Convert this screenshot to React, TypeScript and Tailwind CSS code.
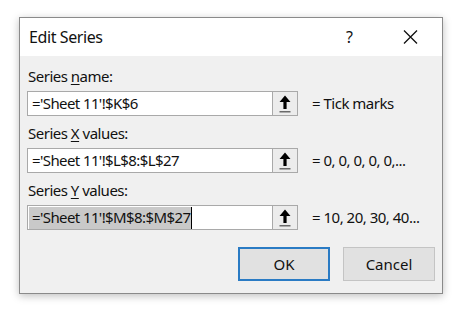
import React from "react";

const font = { fontFamily: '"Noto Sans", "Open Sans", sans-serif' };

function UpArrow() {
  return (
    <svg width="16" height="20" viewBox="0 0 16 20">
      <path d="M8 1.5 L13.5 8 L9.6 8 L9.6 15 L6.4 15 L6.4 8 L2.5 8 Z" fill="#000" />
      <rect x="2.5" y="17" width="11" height="1.5" fill="#6a6a6a" />
    </svg>
  );
}

function RefInput({ text, selected }: { text: string; selected?: boolean }) {
  return (
    <div className="flex h-[25px] w-[271px] border border-[#a9a9a9] bg-white">
      <div className="flex-1 flex items-center pl-[1px] overflow-hidden">
        {selected ? (
          <span className="h-[22px] flex items-center bg-[#c9c9c9] pl-[3px] pr-[1px] border-r border-black text-[15px] tracking-[-0.6px] text-[#111] whitespace-nowrap leading-none">
            {text}
          </span>
        ) : (
          <span className="pl-[3px] text-[15px] tracking-[-0.6px] text-[#111] whitespace-nowrap leading-none">{text}</span>
        )}
      </div>
      <div className="w-[25px] h-full border-l border-[#a9a9a9] bg-[#ececec] flex items-center justify-center">
        <UpArrow />
      </div>
    </div>
  );
}

function Row({
  label,
  mnemonicIdx,
  text,
  value,
  selected,
}: {
  label: string;
  mnemonicIdx: number;
  text: string;
  value: string;
  selected?: boolean;
}) {
  return (
    <div className="flex flex-col">
      <div className="h-[20px] leading-[20px] text-[15px] tracking-[-0.5px] text-[#111] pl-[8px]">
        {label.slice(0, mnemonicIdx)}
        <span className="underline underline-offset-2">{label[mnemonicIdx]}</span>
        {label.slice(mnemonicIdx + 1)}
      </div>
      <div className="flex items-center mt-[5px] pl-[7px]">
        <RefInput text={text} selected={selected} />
        <span className="ml-[14px] text-[15px] tracking-[-0.5px] text-[#111] whitespace-nowrap">{value}</span>
      </div>
    </div>
  );
}

export default function App() {
  return (
    <div className="w-[474px] h-[316px] bg-white pt-[17px] pl-[19px]" style={font}>
      <div className="w-[424px] h-[277px] border border-[#8a8a8a] bg-[#f0f0f0] shadow-[0_2px_8px_rgba(0,0,0,0.25)] flex flex-col">
        <div className="h-[38px] bg-white flex items-center pl-[9px] pr-[24px]">
          <span className="text-[16px] tracking-[-0.4px] text-[#111] flex-1">Edit Series</span>
          <span className="text-[16px] text-[#111] mr-[50px]">?</span>
          <svg width="15" height="14" viewBox="0 0 15 14">
            <path d="M1 0.5 L14 13.5 M14 0.5 L1 13.5" stroke="#111" strokeWidth="1.3" />
          </svg>
        </div>
        <div className="flex flex-col pt-[10px] gap-[7px]">
          <Row label="Series name:" mnemonicIdx={7} text="='Sheet 11'!$K$6" value="= Tick marks" />
          <Row label="Series X values:" mnemonicIdx={7} text="='Sheet 11'!$L$8:$L$27" value="= 0, 0, 0, 0, 0,..." />
          <Row
            label="Series Y values:"
            mnemonicIdx={7}
            text="='Sheet 11'!$M$8:$M$27"
            value="= 10, 20, 30, 40..."
            selected
          />
        </div>
        <div className="flex justify-end gap-[13px] mt-[17px] pr-[7px]">
          <button className="w-[92px] h-[34px] border-2 border-[#2a7bc4] bg-[#e1e1e1] text-[15px] text-[#111]">
            OK
          </button>
          <button className="w-[92px] h-[34px] border border-[#c4c4c4] bg-[#e1e1e1] text-[15px] text-[#111]">
            Cancel
          </button>
        </div>
      </div>
    </div>
  );
}
